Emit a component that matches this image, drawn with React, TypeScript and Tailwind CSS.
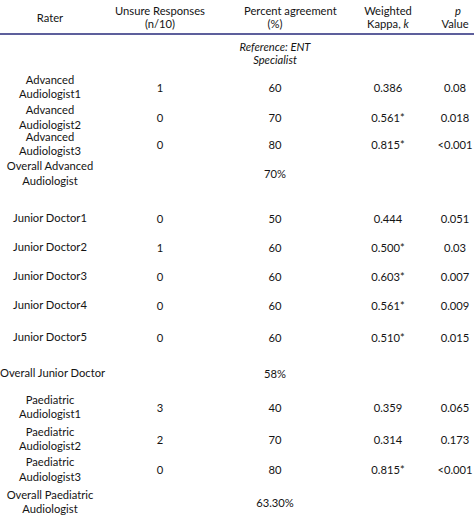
import React from "react";

type Row = {
  rater: string[];
  unsure?: string;
  pct?: string;
  kappa?: string;
  p?: string;
  h: string;
  extra?: string;
};

const rows: Row[] = [
  { rater: ["Advanced", "Audiologist1"], unsure: "1", pct: "60", kappa: "0.386", p: "0.08", h: "h-[32px]" },
  { rater: ["Advanced", "Audiologist2"], unsure: "0", pct: "70", kappa: "0.561*", p: "0.018", h: "h-[26px]" },
  { rater: ["Advanced", "Audiologist3"], unsure: "0", pct: "80", kappa: "0.815*", p: "<0.001", h: "h-[30px]" },
  { rater: ["Overall Advanced", "Audiologist"], pct: "70%", h: "h-[28px]", extra: "mb-[16px]" },
  { rater: ["Junior Doctor1"], unsure: "0", pct: "50", kappa: "0.444", p: "0.051", h: "h-[30px]" },
  { rater: ["Junior Doctor2"], unsure: "1", pct: "60", kappa: "0.500*", p: "0.03", h: "h-[28px]" },
  { rater: ["Junior Doctor3"], unsure: "0", pct: "60", kappa: "0.603*", p: "0.007", h: "h-[30px]" },
  { rater: ["Junior Doctor4"], unsure: "0", pct: "60", kappa: "0.561*", p: "0.009", h: "h-[28px]" },
  { rater: ["Junior Doctor5"], unsure: "0", pct: "60", kappa: "0.510*", p: "0.015", h: "h-[36px]" },
  { rater: ["Overall Junior Doctor"], pct: "58%", h: "h-[36px]" },
  { rater: ["Paediatric", "Audiologist1"], unsure: "3", pct: "40", kappa: "0.359", p: "0.065", h: "h-[32px]" },
  { rater: ["Paediatric", "Audiologist2"], unsure: "2", pct: "70", kappa: "0.314", p: "0.173", h: "h-[32px]" },
  { rater: ["Paediatric", "Audiologist3"], unsure: "0", pct: "80", kappa: "0.815*", p: "<0.001", h: "h-[24px]" },
  { rater: ["Overall Paediatric", "Audiologist"], pct: "63.30%", h: "h-[46px]" },
];

const grid = "grid grid-cols-[100px_120px_110px_106px_38px] items-center";

export default function App() {
  return (
    <div
      className="w-[474px] bg-white text-[#141414] text-[11.2px] leading-[13px] overflow-hidden"
      style={{ fontFamily: "Lato, 'Liberation Sans', sans-serif" }}
    >
      {/* header */}
      <div className={`${grid} h-[33px] text-center`}>
        <div className="pt-[1px]">Rater</div>
        <div>
          <div className="whitespace-nowrap">Unsure Responses</div>
          <div>(n/10)</div>
        </div>
        <div>
          <div className="whitespace-nowrap pl-[24px]">Percent agreement</div>
          <div>(%)</div>
        </div>
        <div className="pl-[10px]">
          <div>Weighted</div>
          <div>
            Kappa, <i>k</i>
          </div>
        </div>
        <div>
          <div className="pl-[6px]">
            <i>p</i>
          </div>
          <div>Value</div>
        </div>
      </div>
      <div className="h-[2px] bg-[#5d5f9c]" />

      {/* reference */}
      <div className={`${grid} h-[36px] text-center`}>
        <div />
        <div />
        <div className="italic">
          <div className="whitespace-nowrap">Reference: ENT</div>
          <div>Specialist</div>
        </div>
        <div />
        <div />
      </div>

      {rows.map((r, i) => (
        <div key={i} className={`${grid} ${r.h} ${r.extra ?? ""} text-center`}>
          <div className="whitespace-nowrap">
            {r.rater.map((t, j) => (
              <div key={j} className="leading-[14.5px]">
                {t}
              </div>
            ))}
          </div>
          <div>{r.unsure ?? ""}</div>
          <div>{r.pct ?? ""}</div>
          <div className="pl-[10px]">{r.kappa ?? ""}</div>
          <div>{r.p ?? ""}</div>
        </div>
      ))}
    </div>
  );
}
